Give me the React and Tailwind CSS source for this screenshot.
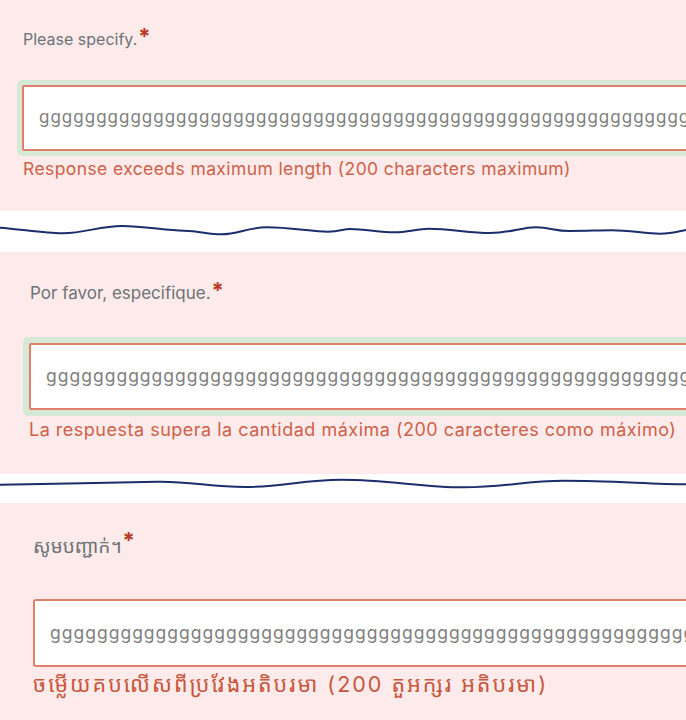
const G = "g".repeat(90);

function Wave({ d, h }) {
  return (
    <svg width="686" height={h} viewBox={`0 0 686 ${h}`} className="block">
      <path d={d} fill="none" stroke="#1b2d6b" strokeWidth="2" strokeLinecap="round" />
    </svg>
  );
}

function Star() {
  return <span className="text-[#b83a26] text-[22px] font-bold align-top leading-[14px] ml-[1px] tracking-normal">*</span>;
}

export default function App() {
  const font = { fontFamily: 'Inter, "Noto Sans Khmer", "Khmer OS", "Noto Sans", sans-serif' };
  return (
    <div className="w-[686px] h-[720px] overflow-hidden bg-white" style={font}>
      {/* Section 1 */}
      <div className="h-[211px] bg-[#fcebea] overflow-hidden pt-[29px]">
        <div className="pl-[23px] text-[16px] leading-[20px] text-[#6f7276]">
          Please specify.<Star />
        </div>
        <div className="ml-[17px] mt-[31px] w-[800px] rounded-[5px] bg-[#d6e9d6] p-[5px]">
          <div className="h-[66px] border-2 border-[#e0806a] bg-white rounded-[2px] flex items-center pl-[15px] text-[17px] tracking-[1px] text-[#808080] whitespace-nowrap overflow-hidden">
            {G}
          </div>
        </div>
        <div className="pl-[23px] mt-[2px] text-[17.5px] leading-[22px] text-[#cf6048] whitespace-nowrap tracking-[0.4px]">
          Response exceeds maximum length (200 characters maximum)
        </div>
      </div>
      {/* Wave 1 */}
      <div className="h-[41px] bg-white">
        <Wave h={41} d="M0 16.7 C20 18 45 22.5 63 22.3 C85 22 100 15 122 15 C145 15 165 19.5 184 19.7 C200 20 208 23.3 221 23.3 C238 23.3 248 16.3 267 16.3 C290 16.3 312 20.7 328 20.7 C340 20.7 343 18 350 18 C365 18 380 21.3 394 21.3 C408 21.3 417 17.7 429 17.7 C450 17.7 470 22 490 22 C510 22 522 16.3 536 16.3 C550 16.3 555 20 569 20 C585 20 600 19.3 612 19.3 C630 19.3 645 22.7 660 22.7 C672 22.7 680 20 686 19" />
      </div>
      {/* Section 2 */}
      <div className="h-[222px] bg-[#fcebea] overflow-hidden pt-[31px]">
        <div className="pl-[30px] text-[17px] leading-[20px] text-[#6f7276]">
          Por favor, especifique.<Star />
        </div>
        <div className="ml-[23px] mt-[34px] w-[800px] rounded-[5px] bg-[#d6e9d6] p-[6px] pr-0">
          <div className="h-[67px] border-2 border-[#e0806a] bg-white rounded-[2px] flex items-center pl-[15px] text-[17.5px] tracking-[1px] text-[#808080] whitespace-nowrap overflow-hidden">
            {G}
          </div>
        </div>
        <div className="pl-[29px] mt-[3px] text-[18px] leading-[22px] text-[#cf6048] whitespace-nowrap tracking-[0.5px]">
          La respuesta supera la cantidad máxima (200 caracteres como máximo)
        </div>
      </div>
      {/* Wave 2 */}
      <div className="h-[29px] bg-white">
        <Wave h={29} d="M0 10.7 C50 10.2 110 8.7 157 7.7 C190 7 210 13 245 13 C280 13 305 5.7 341 5.7 C390 5.7 420 13.3 464 13.3 C505 13.3 525 6.7 564 6.7 C610 6.7 650 10 686 10.3" />
      </div>
      {/* Section 3 */}
      <div className="h-[217px] bg-[#fcebea] overflow-hidden pt-[30px]">
        <div className="pl-[33px] text-[19px] leading-[28px] text-[#6f7276]">
          សូមបញ្ជាក់។<Star />
        </div>
        <div className="ml-[33px] mt-[38px] w-[800px]">
          <div className="h-[68px] border-2 border-[#e0806a] bg-white rounded-[3px] flex items-center pl-[15px] text-[17.5px] tracking-[1px] text-[#808080] whitespace-nowrap overflow-hidden">
            {G}
          </div>
        </div>
        <div className="pl-[33px] mt-[3px] text-[21.5px] leading-[28px] text-[#c9553b] whitespace-nowrap tracking-[2px]">
          ចម្លើយគបលើសពីប្រវែងអតិបរមា (200 តួអក្សរ អតិបរមា)
        </div>
      </div>
    </div>
  );
}
